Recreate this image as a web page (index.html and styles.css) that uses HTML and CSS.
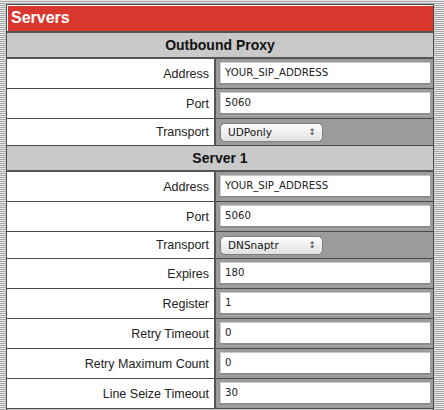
FILE: index.html
```html
<!DOCTYPE html>
<html>
<head>
<meta charset="utf-8">
<link rel="stylesheet" href="styles.css">
</head>
<body>
<table class="servers">
  <tr><td class="title" colspan="2">Servers</td></tr>
  <tr><td class="section" colspan="2">Outbound Proxy</td></tr>
  <tr class="row"><td class="label">Address</td><td class="field"><div class="input">YOUR_SIP_ADDRESS</div></td></tr>
  <tr class="row"><td class="label">Port</td><td class="field"><div class="input">5060</div></td></tr>
  <tr class="srow"><td class="label">Transport</td><td class="field"><div class="select"><span>UDPonly</span><span class="arrows">&#8597;</span></div></td></tr>
  <tr><td class="section" colspan="2">Server 1</td></tr>
  <tr class="row"><td class="label">Address</td><td class="field"><div class="input">YOUR_SIP_ADDRESS</div></td></tr>
  <tr class="row"><td class="label">Port</td><td class="field"><div class="input">5060</div></td></tr>
  <tr class="srow"><td class="label">Transport</td><td class="field"><div class="select"><span>DNSnaptr</span><span class="arrows">&#8597;</span></div></td></tr>
  <tr class="row"><td class="label">Expires</td><td class="field"><div class="input">180</div></td></tr>
  <tr class="row"><td class="label">Register</td><td class="field"><div class="input">1</div></td></tr>
  <tr class="row"><td class="label">Retry Timeout</td><td class="field"><div class="input">0</div></td></tr>
  <tr class="row"><td class="label">Retry Maximum Count</td><td class="field"><div class="input">0</div></td></tr>
  <tr class="row"><td class="label">Line Seize Timeout</td><td class="field"><div class="input">30</div></td></tr>
  <tr><td class="tail" colspan="2"></td></tr>
</table>
</body>
</html>
```
FILE: styles.css
```css
html, body {
  margin: 0;
  padding: 0;
  height: 410px;
  overflow: hidden;
  background: repeating-linear-gradient(to bottom, #e6e6e6 0px, #e6e6e6 1px, #a9a9a9 1px, #a9a9a9 2px);
}
.servers {
  margin: 4px 0 0 6px;
  width: 428px;
  border-collapse: collapse;
  border: 1px solid #3a3a3a;
  background: #fff;
  font-family: "Liberation Sans", Arial, sans-serif;
}
.servers td {
  padding: 0;
  border: 1px solid #4a4a4a;
}
.title {
  background: #d9372d;
  color: #fff;
  font-weight: bold;
  font-size: 16px;
  height: 26px;
  padding-left: 4px !important;
  border-bottom: 2px solid #555 !important;
  box-shadow: inset 1px 1px 0 #fff;
}
.section {
  background: #c9c9c9;
  color: #111;
  font-weight: bold;
  font-size: 14px;
  text-align: center;
  height: 24px;
  border-bottom: 2px solid #555 !important;
}
.tail {
  background: #c9c9c9;
  height: 2px;
  font-size: 0;
  line-height: 0;
}
.label {
  width: 202px;
  text-align: right;
  padding-right: 5px !important;
  font-size: 12.5px;
  color: #222;
  background: #fff;
}
.row .label { height: 29px; }
.srow .label { height: 26px; }
.field {
  background: #9b9b9b;
  padding: 0 3px 0 4px !important;
  border-left: 2px solid #555 !important;
}
.input {
  height: 20px;
  line-height: 20px;
  background: #fff;
  border-top: 1px solid #c8c8c8;
  border-left: 1px solid #d0d0d0;
  box-shadow: 0 2px 0 #8a8a8a, 0 3px 0 #a6a6a6;
  margin-bottom: 3px;
  padding-left: 4px;
  font-family: "DejaVu Sans", sans-serif;
  font-size: 10.2px;
  color: #222;
}
.select {
  width: 88px;
  height: 17px;
  display: flex;
  align-items: center;
  justify-content: space-between;
  border: 1px solid #7d7d7d;
  border-radius: 5px;
  background: linear-gradient(to bottom, #fdfdfd, #ececec 60%, #e0e0e0);
  padding: 0 6px 0 7px;
  box-sizing: content-box;
  font-family: "DejaVu Sans", sans-serif;
  font-size: 10.5px;
  color: #111;
}
.arrows {
  font-size: 9px;
  color: #444;
}
```
